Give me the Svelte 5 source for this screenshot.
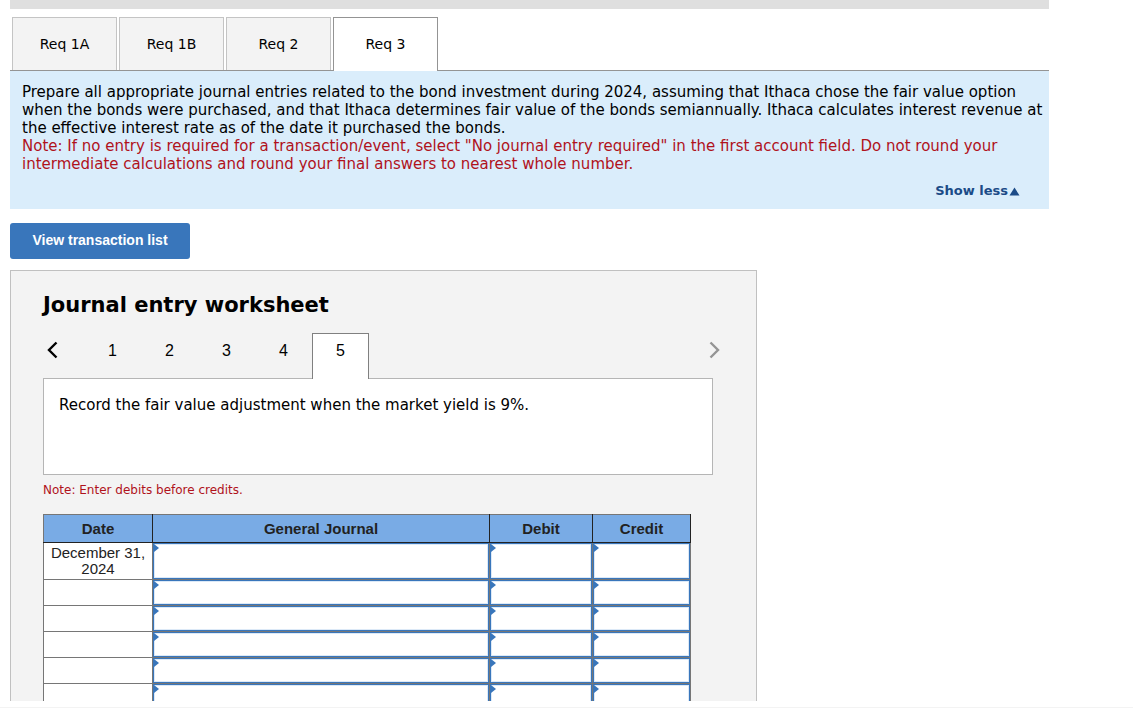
<script lang="ts">
  const requirements = ["Req 1A", "Req 1B", "Req 2", "Req 3"];
  const entries = [
    { id: 1, task: "" },
    { id: 2, task: "" },
    { id: 3, task: "" },
    { id: 4, task: "" },
    { id: 5, task: "Record the fair value adjustment when the market yield is 9%." },
  ];
  const fields = ["General Journal", "Debit", "Credit"];
  // Only the first line of an entry carries its date.
  const rows = ["December 31, 2024", "", "", "", "", "", ""];

  let activeReq = $state("Req 3");
  let activeEntry = $state(5);
  let expanded = $state(true);

  const entry = $derived(entries.find((e) => e.id === activeEntry));

  function step(delta: number) {
    activeEntry = Math.min(entries.length, Math.max(1, activeEntry + delta));
  }
</script>

<div class="page">
  <main class="content">
    <div class="bar"></div>

    <div class="req-tabs" role="tablist" aria-label="Requirements">
      {#each requirements as req}
        <button
          class="req-tab"
          class:active={req === activeReq}
          role="tab"
          aria-selected={req === activeReq}
          onclick={() => (activeReq = req)}
        >
          {req}
        </button>
      {/each}
    </div>

    <section class="instructions">
      {#if expanded}
        <p>
          Prepare all appropriate journal entries related to the bond investment during 2024, assuming
          that Ithaca chose the fair value option when the bonds were purchased, and that Ithaca
          determines fair value of the bonds semiannually. Ithaca calculates interest revenue at the
          effective interest rate as of the date it purchased the bonds.
        </p>
        <p class="note">
          Note: If no entry is required for a transaction/event, select "No journal entry required" in
          the first account field. Do not round your intermediate calculations and round your final
          answers to nearest whole number.
        </p>
      {/if}
      <button class="toggle" aria-expanded={expanded} onclick={() => (expanded = !expanded)}>
        {expanded ? "Show less" : "Show more"}
        <svg class:flipped={!expanded} width="11" height="9" viewBox="0 0 11 9" aria-hidden="true">
          <path d="M5.5 0.5 L10.5 8.5 H0.5 Z" fill="currentColor" />
        </svg>
      </button>
    </section>

    <button class="primary">View transaction list</button>

    <section class="worksheet">
      <h2>Journal entry worksheet</h2>

      <div class="pager">
        <button class="arrow" aria-label="Previous entry" onclick={() => step(-1)}>
          <svg width="11" height="18" viewBox="0 0 11 18" aria-hidden="true">
            <path d="M9.5 1.5 L2 9 L9.5 16.5" fill="none" stroke="currentColor" stroke-width="2.4" />
          </svg>
        </button>
        {#each entries as { id }}
          <button
            class="page-tab"
            class:active={id === activeEntry}
            aria-current={id === activeEntry ? "page" : undefined}
            onclick={() => (activeEntry = id)}
          >
            {id}
          </button>
        {/each}
        <button
          class="arrow next"
          class:end={activeEntry === entries.length}
          aria-label="Next entry"
          onclick={() => step(1)}
        >
          <svg width="11" height="18" viewBox="0 0 11 18" aria-hidden="true">
            <path d="M1.5 1.5 L9 9 L1.5 16.5" fill="none" stroke="currentColor" stroke-width="2.4" />
          </svg>
        </button>
      </div>

      <div class="task">{entry?.task}</div>
      <p class="hint">Note: Enter debits before credits.</p>

      <table>
        <colgroup>
          <col class="date" />
          <col />
          <col class="debit" />
          <col class="credit" />
        </colgroup>
        <thead>
          <tr>
            <th scope="col">Date</th>
            {#each fields as field}
              <th scope="col">{field}</th>
            {/each}
          </tr>
        </thead>
        <tbody>
          {#each rows as date, i}
            <tr>
              <td>{date}</td>
              {#each fields as field}
                <td class="entry"><input type="text" aria-label="{field}, line {i + 1}" /></td>
              {/each}
            </tr>
          {/each}
        </tbody>
      </table>
    </section>
  </main>

  <footer></footer>
</div>

<style>
  :global(body) {
    margin: 0;
    background: #fff;
  }
  .page {
    display: flex;
    flex-direction: column;
    height: 100vh;
    color: #000;
    font-family: "DejaVu Sans", Verdana, sans-serif;
    font-size: 15px;
    line-height: 18px;
  }
  .content {
    flex: 1;
    min-height: 0;
    overflow: hidden;
    padding: 0 84px 0 10px;
  }
  button {
    margin: 0;
    padding: 0;
    border: 0;
    background: none;
    color: inherit;
    font: inherit;
    cursor: pointer;
  }
  p {
    margin: 0;
  }
  .bar {
    height: 9px;
    background: #dfdfdf;
  }

  .req-tabs {
    display: flex;
    gap: 2px;
    padding: 8px 2px 0;
    border-bottom: 1px solid #949494;
  }
  .req-tab {
    box-sizing: border-box;
    width: 105px;
    height: 53px;
    border: 1px solid #c4c4c4;
    border-bottom: 0;
    background: #f3f3f3;
    font-size: 14px;
  }
  /* The active tab covers the rule below the strip. */
  .req-tab.active {
    height: 54px;
    margin-bottom: -1px;
    padding-bottom: 1px;
    border-color: #949494;
    background: #fff;
  }

  .instructions {
    display: flex;
    flex-direction: column;
    padding: 12px 0 9px 12px;
    background: #daedfb;
  }
  .note,
  .hint {
    color: #b0121b;
  }
  .toggle {
    display: flex;
    align-items: center;
    align-self: flex-end;
    gap: 1px;
    margin: 9px 29px 0 0;
    color: #1b4b87;
    font-size: 13px;
    font-weight: bold;
  }
  .flipped {
    transform: rotate(180deg);
  }

  .primary {
    display: block;
    width: 180px;
    height: 36px;
    margin: 14px 0 11px;
    padding-bottom: 2px;
    border-radius: 3px;
    background: #3976bb;
    color: #fff;
    font-family: "Liberation Sans", Arial, sans-serif;
    font-size: 14px;
    font-weight: bold;
  }

  .worksheet {
    box-sizing: border-box;
    max-width: 747px;
    padding: 20px 32px;
    border: 1px solid #c0c0c0;
    background: #f3f3f3;
  }
  h2 {
    margin: 0 0 14px;
    font-size: 21px;
    line-height: 28px;
  }
  .pager {
    position: relative;
    display: flex;
    margin-bottom: -1px;
    font-family: "Liberation Sans", Arial, sans-serif;
    font-size: 16px;
  }
  .page-tab {
    box-sizing: border-box;
    width: 57px;
    height: 46px;
    padding-bottom: 12px;
    border: 1px solid transparent;
    border-bottom: 0;
  }
  .page-tab.active {
    border-color: #808080;
    background: #fff;
  }
  .arrow {
    display: flex;
    width: 41px;
    padding: 8px 4px;
  }
  .arrow.next {
    justify-content: flex-end;
    margin-left: auto;
  }
  .arrow.end {
    color: #949494;
  }
  .task {
    min-height: 63px;
    margin-right: 11px;
    padding: 17px 15px 15px;
    border: 1px solid #b5b5b5;
    background: #fff;
    font-size: 15px;
  }
  .hint {
    margin: 6px 0 15px;
    font-size: 12px;
  }

  table {
    width: calc(100% - 33px);
    border-collapse: collapse;
    table-layout: fixed;
    color: #222;
    font-family: "Liberation Sans", Arial, sans-serif;
    font-size: 15px;
    line-height: 16px;
    text-align: center;
  }
  .date {
    width: 109px;
  }
  .debit {
    width: 103px;
  }
  .credit {
    width: 98px;
  }
  th {
    height: 27px;
    padding: 0;
    border: 1px solid #222;
    border-top-color: #767676;
    background: #79abe5;
  }
  th:first-child {
    border-left-color: #767676;
  }
  td {
    height: 21px;
    padding: 2px 4px;
    border: 1px solid #767676;
    background: #fff;
  }
  .entry {
    position: relative;
    padding: 0;
  }
  .entry input {
    position: absolute;
    inset: 0;
    box-sizing: border-box;
    width: 100%;
    height: 100%;
    padding: 0 8px;
    border: 1px solid #3976bb;
    border-radius: 0;
    outline: 0;
    background: #fff;
    box-shadow: inset 0 0 0 1px #dce9f7;
    font: inherit;
  }
  /* Small marker in the corner of every editable cell. */
  .entry::after {
    content: "";
    position: absolute;
    top: 1px;
    left: 1px;
    border: solid transparent;
    border-width: 4px 0 4px 5px;
    border-left-color: #3976bb;
    pointer-events: none;
  }

  footer {
    height: 4px;
    margin-top: 6px;
    border-top: 1px solid #f3f3f3;
  }
</style>
